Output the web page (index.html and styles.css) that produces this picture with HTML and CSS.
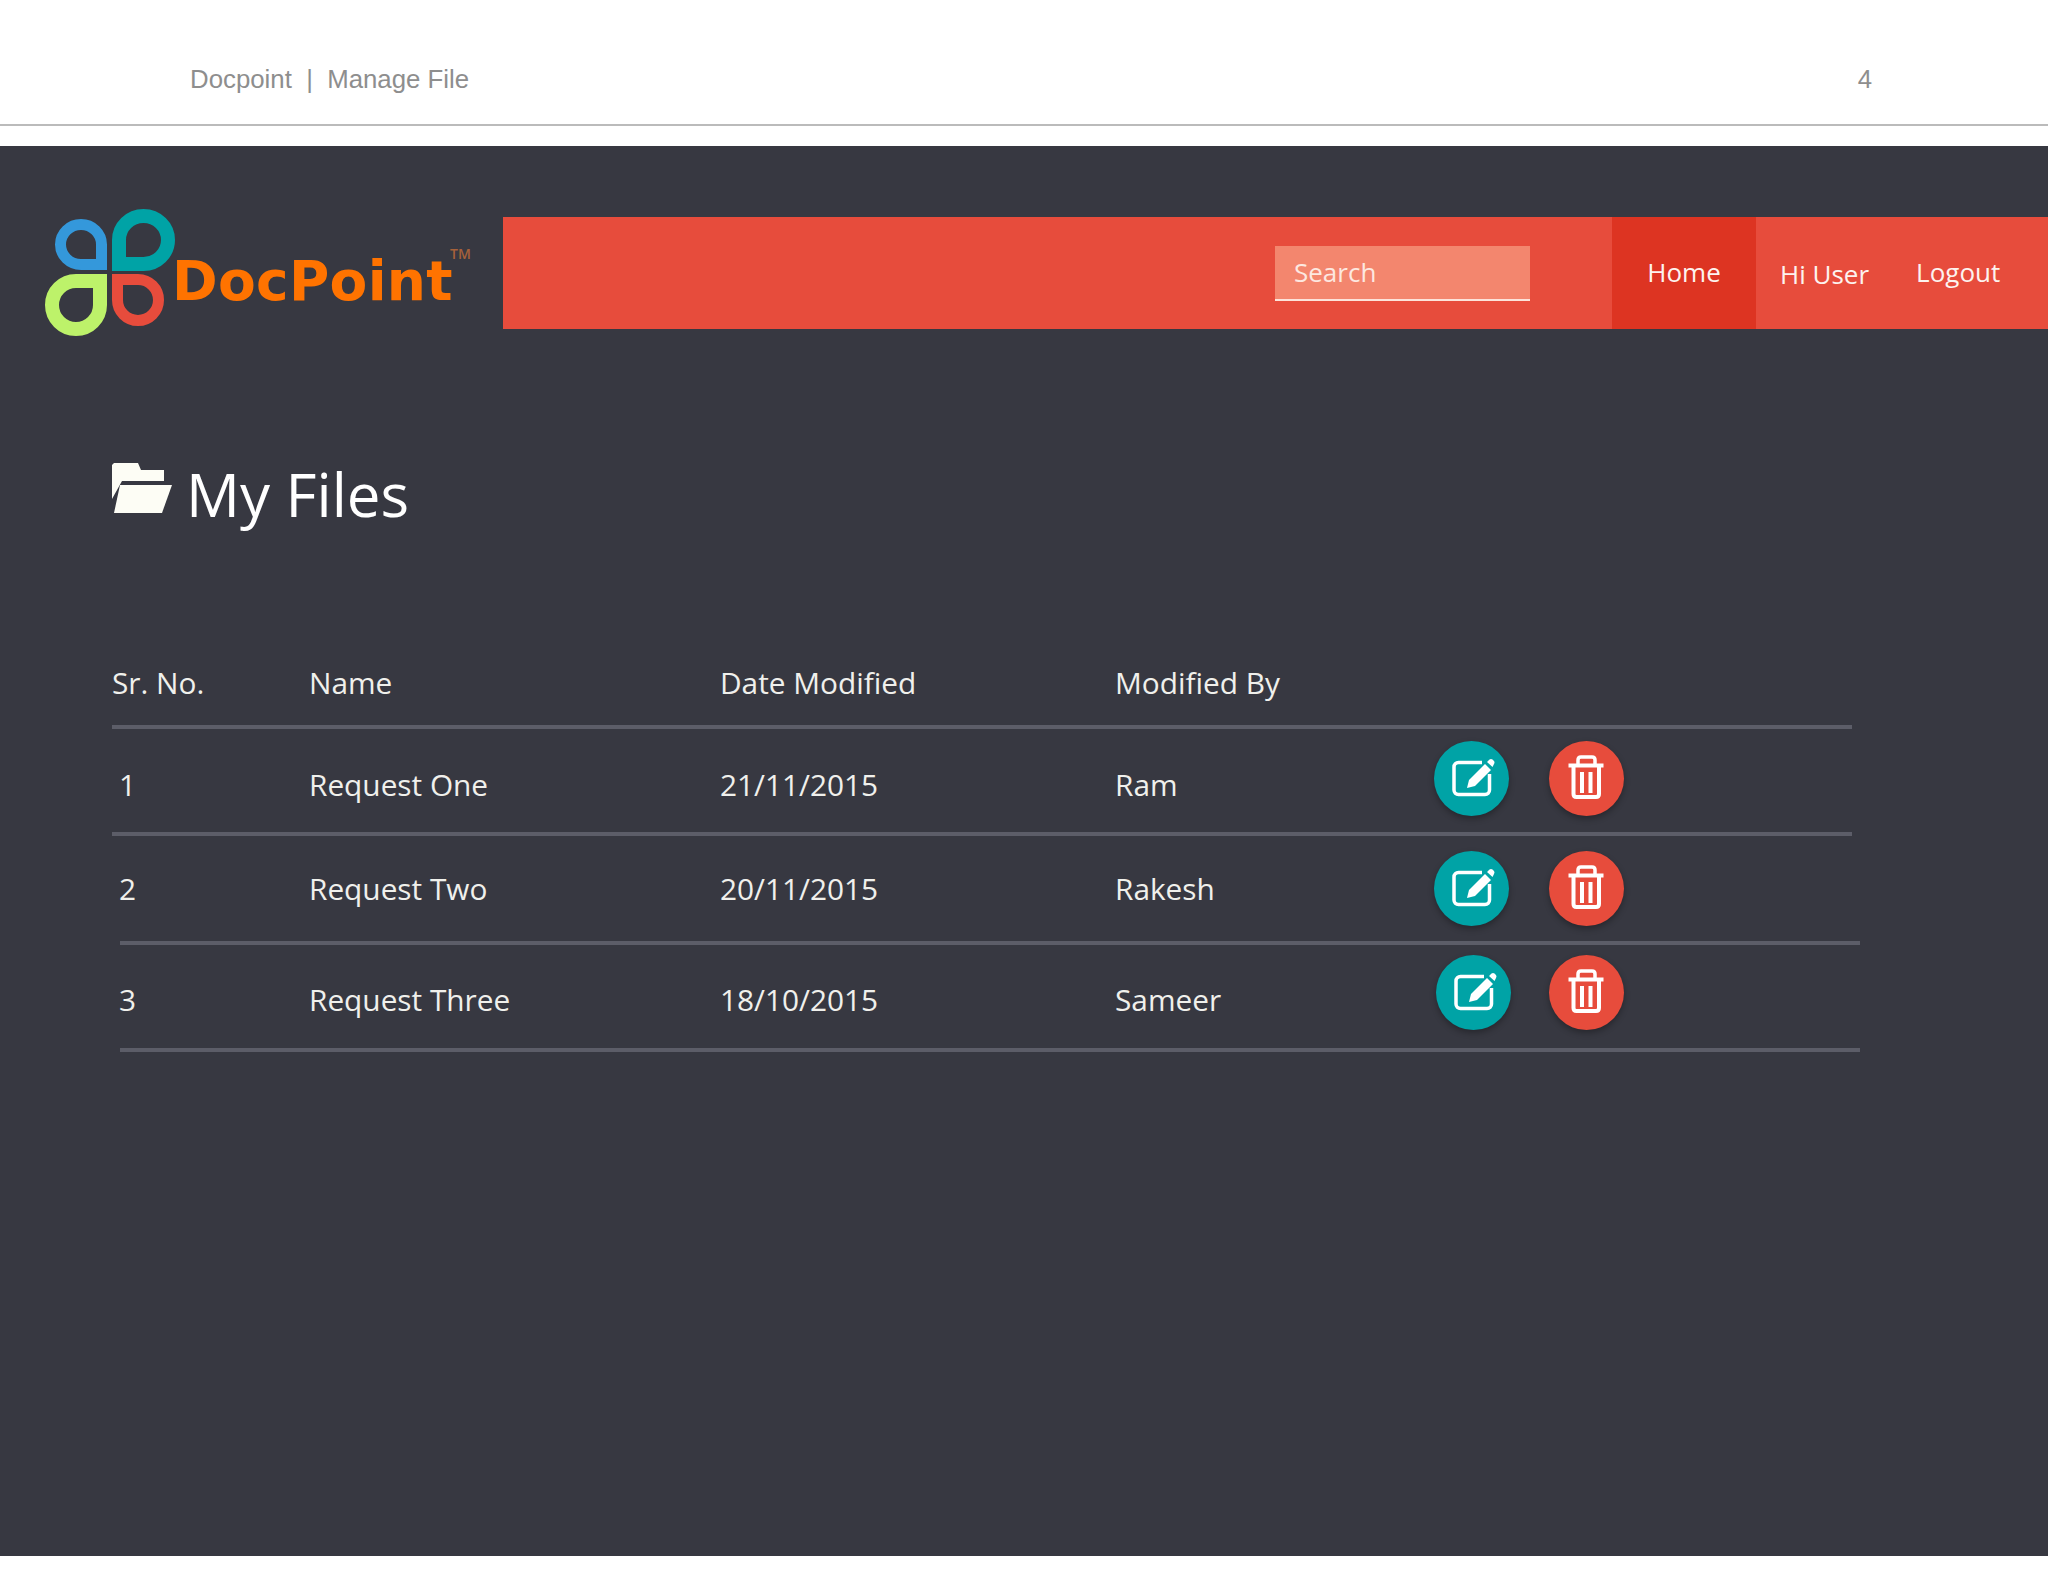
FILE: index.html
```html
<!DOCTYPE html>
<html>
<head>
    <title>Docpoint | Manage File</title>
    <link rel="stylesheet" href="styles.css">
</head>
<body>
    <div class="doc-header">
        <span>Docpoint &nbsp;|&nbsp; Manage File</span>
        <span>4</span>
    </div>

    <div class="screen">
        <div class="topbar">
            <div class="logo">
                <svg class="logo-mark" viewBox="40 205 140 135" width="140" height="135" fill="none">
                    <path d="M101.5 264.5H81A20.5 20 0 1 1 101.5 244.5Z" stroke="#3498db" stroke-width="11"/>
                    <path d="M119 264V240A24.5 24 0 1 1 143.5 264Z" stroke="#00a3a6" stroke-width="14"/>
                    <path d="M100 281V305A24 24 0 1 1 76 281Z" stroke="#bdf26a" stroke-width="14"/>
                    <path d="M117.5 279.5H138A20.5 20.5 0 1 1 117.5 300Z" stroke="#e74c3c" stroke-width="11"/>
                </svg>
                <span class="logo-text">DocPoint</span>
                <sup class="logo-tm">TM</sup>
            </div>
            <div class="nav">
                <div class="search">Search</div>
                <a class="nav-link active">Home</a>
                <a class="nav-link user">Hi User</a>
                <a class="nav-link logout">Logout</a>
            </div>
        </div>

        <h1 class="title">
            <svg viewBox="0 0 60 51" width="60" height="51">
                <path d="M2 1H26L29 8H52V19H10L0 37V3Z" fill="#fdfdf5"/>
                <path d="M8 23H60L50 51H2Z" fill="#fdfdf5"/>
            </svg>
            My Files
        </h1>

        <div class="files">
            <div class="row head">
                <span>Sr. No.</span><span>Name</span><span>Date Modified</span><span>Modified By</span>
            </div>
            <div class="rule"></div>

            <div class="row row-one">
                <span class="num">1</span><span>Request One</span><span>21/11/2015</span><span>Ram</span>
                <div class="actions">
                    <button class="round edit"><svg viewBox="0 0 75 75"><use href="#icon-edit"/></svg></button>
                    <button class="round del"><svg viewBox="0 0 75 75"><use href="#icon-trash"/></svg></button>
                </div>
            </div>
            <div class="rule"></div>

            <div class="row row-two">
                <span class="num">2</span><span>Request Two</span><span>20/11/2015</span><span>Rakesh</span>
                <div class="actions">
                    <button class="round edit"><svg viewBox="0 0 75 75"><use href="#icon-edit"/></svg></button>
                    <button class="round del"><svg viewBox="0 0 75 75"><use href="#icon-trash"/></svg></button>
                </div>
            </div>
            <div class="rule shifted"></div>

            <div class="row row-three">
                <span class="num">3</span><span>Request Three</span><span>18/10/2015</span><span>Sameer</span>
                <div class="actions">
                    <button class="round edit"><svg viewBox="0 0 75 75"><use href="#icon-edit"/></svg></button>
                    <button class="round del"><svg viewBox="0 0 75 75"><use href="#icon-trash"/></svg></button>
                </div>
            </div>
            <div class="rule shifted"></div>
        </div>
    </div>

    <svg class="icon-defs" width="0" height="0">
        <symbol id="icon-edit" viewBox="0 0 75 75">
            <path d="M48 21.5H24.5a4.5 4.5 0 0 0-4.5 4.500V49a4.500 4.500 0 0 0 4.500 4.500H51a4.500 4.500 0 0 0 4.500-4.500V33" fill="none" stroke="#fff" stroke-width="3.500"/>
            <path d="M33 47L35 39L51 23L57 29L41 45Z" fill="#fff"/>
            <path d="M53 21L55.500 18.500Q57 17.500 58.500 18.500L60 20Q61 21.500 60 23L58.500 26Z" fill="#fff"/>
        </symbol>
        <symbol id="icon-trash" viewBox="0 0 75 75">
            <path d="M19.500 24.500H54.500" stroke="#fff" stroke-width="4" fill="none"/>
            <path d="M29 23V19Q29 16 32 16H43Q46 16 46 19V23" stroke="#fff" stroke-width="3.500" fill="none"/>
            <path d="M24.500 25V53Q24.500 56 27.500 56H47Q50 56 50 53V25" stroke="#fff" stroke-width="4" fill="none"/>
            <path d="M33 31V52M41.500 31V52" stroke="#fff" stroke-width="4" fill="none"/>
        </symbol>
    </svg>
</body>
</html>
```

FILE: styles.css
```css
body {
    margin: 0;
    height: 1576px;
    overflow: hidden;
    background: #fff;
    font-family: "Open Sans", sans-serif;
}

.doc-header {
    height: 126px;
    padding: 60px 176px 0 190px;
    box-sizing: border-box;
    display: flex;
    justify-content: space-between;
    border-bottom: 2px solid #bbbbbb;
    font-family: "Liberation Sans", Arial, sans-serif;
    font-size: 25.8px;
    line-height: 38px;
    color: #8e8e8e;
}

.screen {
    margin-top: 20px;
    height: 1410px;
    background: #373841;
    padding-top: 71px;
    box-sizing: border-box;
    color: #f4f4f0;
}

.topbar {
    display: flex;
    align-items: flex-start;
    height: 112px;
}

.logo {
    width: 503px;
    flex: none;
    position: relative;
}

.logo-mark {
    position: absolute;
    left: 40px;
    top: -12px;
}

.logo-text {
    position: absolute;
    left: 172px;
    top: 29px;
    font-family: "DejaVu Sans", sans-serif;
    font-weight: 700;
    font-size: 55px;
    line-height: 70px;
    letter-spacing: 0.3px;
    color: #ff7300;
}

.logo-tm {
    position: absolute;
    left: 450px;
    top: 30px;
    margin: 0;
    font-size: 14px;
    font-weight: 600;
    line-height: 14px;
    color: #a6613a;
}

.nav {
    flex: 1;
    height: 112px;
    background: #e74c3c;
    display: flex;
    align-items: center;
    font-size: 26px;
    color: #fdf3ef;
}

.search {
    margin-left: 772px;
    margin-right: 82px;
    width: 255px;
    height: 55px;
    box-sizing: border-box;
    padding: 0 19px;
    line-height: 53px;
    background: #f3866e;
    border-bottom: 2px solid #fde3da;
    color: #fde8e0;
}

.nav-link {
    line-height: 110px;
    padding-bottom: 2px;
}

.nav-link.active {
    width: 144px;
    text-align: center;
    background: #dd3422;
}

.nav-link.user {
    margin-left: 24px;
    padding: 1px 0 0;
}

.nav-link.logout {
    margin-left: 47px;
}

.title {
    margin: 125px 0 0 112px;
    display: flex;
    align-items: center;
    gap: 14px;
    font-weight: 400;
    font-size: 60px;
    line-height: 80px;
    color: #fff;
}

.title svg {
    margin-top: -14px;
}

.files {
    margin-top: 105px;
}

.row {
    width: 1740px;
    margin-left: 112px;
    display: grid;
    grid-template-columns: 197px 411px 395px 319px 1fr;
    align-items: center;
    font-size: 29.8px;
    color: #f0f0ec;
}

.row.head {
    height: 86px;
}

.row-one {
    height: 103px;
    padding-top: 8px;
    box-sizing: border-box;
}

.row-two {
    height: 105px;
}

.row-three {
    height: 103px;
    padding-top: 6px;
    box-sizing: border-box;
}

.num {
    padding-left: 7px;
}

.actions {
    display: flex;
    gap: 40px;
}

.row-one .actions {
    margin-top: -12px;
}

.row-two .actions {
    margin-top: -1px;
}

.row-three .actions {
    margin-top: -15px;
    padding-left: 2px;
}

.row-three .actions .round + .round {
    margin-left: -2px;
}

.round {
    width: 75px;
    height: 75px;
    padding: 0;
    border: none;
    border-radius: 50%;
    box-shadow: 0 3px 6px rgba(0, 0, 0, 0.3);
}

.round svg {
    display: block;
    width: 75px;
    height: 75px;
}

.edit {
    background: #00a3a6;
}

.del {
    background: #e74c3c;
}

.rule {
    width: 1740px;
    height: 4px;
    margin-left: 112px;
    background: #5c5d68;
}

.rule.shifted {
    margin-left: 120px;
}

.icon-defs {
    position: absolute;
}
```
